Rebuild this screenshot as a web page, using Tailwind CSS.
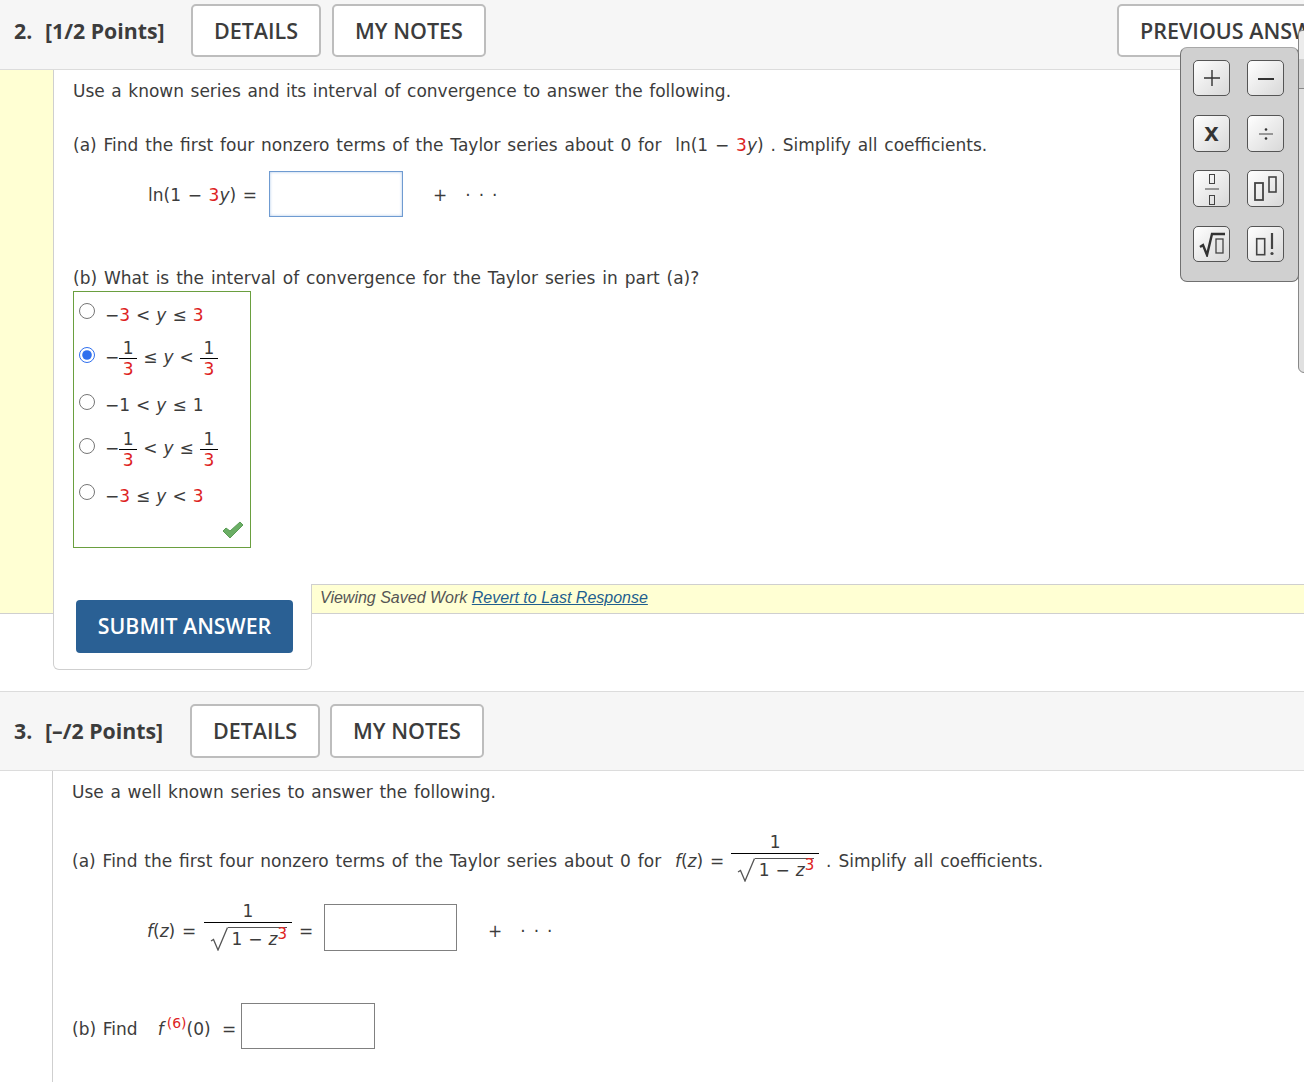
<!DOCTYPE html>
<html lang="en">
<head>
<meta charset="UTF-8">
<title>Taylor series</title>
<script src="https://cdn.jsdelivr.net/npm/@tailwindcss/browser@4"></script>
</head>
<body class="bg-white overflow-hidden">
<div class="relative w-[1304px] h-[1082px] overflow-hidden font-['DejaVu_Sans',sans-serif] text-[17px] [word-spacing:1.3px] text-[#3c3c3c]">

  <!-- Question 2 header -->
  <div class="h-[70px] bg-[#f6f6f6] border-b border-[#dcdcdc] flex items-center pl-[14px] pb-[8px] font-['Open_Sans',sans-serif] [word-spacing:0] whitespace-nowrap">
    <span class="font-bold text-[21.3px] w-[31px] shrink-0">2.</span>
    <span class="font-bold text-[21.3px] w-[146px] shrink-0">[1/2 Points]</span>
    <span class="h-[53px] w-[130px] shrink-0 pt-[2px] bg-white border-2 border-[#bdbdbd] rounded-[5px] flex items-center justify-center text-[21.5px] font-semibold">DETAILS</span>
    <span class="h-[53px] w-[154px] shrink-0 pt-[2px] ml-[11px] bg-white border-2 border-[#bdbdbd] rounded-[5px] flex items-center justify-center text-[21.5px] font-semibold">MY NOTES</span>
    <span class="h-[53px] w-[260px] shrink-0 pt-[2px] ml-[631px] bg-white border-2 border-[#bdbdbd] rounded-[5px] flex items-center pl-[21px] text-[21.5px] font-semibold">PREVIOUS ANSWERS</span>
  </div>

  <!-- Question 2 body -->
  <div class="flex">
    <div class="w-[54px] h-[544px] shrink-0 bg-[#ffffd3] border-r border-b border-[#cfcfcf]"></div>
    <div class="flex-1 min-w-0">
      <div class="pl-[19px] h-[514px]">
        <div class="h-[40px] pt-[3px] flex items-center [word-spacing:1.15px]">Use a known series and its interval of convergence to answer the following.</div>
        <div class="h-[40px] pt-[3px] mt-[14px] flex items-center whitespace-pre [word-spacing:1.45px]">(a) Find the first four nonzero terms of the Taylor series about 0 for  ln(1 − <span class="text-[#d22]">3</span><i>y</i>) . Simplify all coefficients.</div>
        <div class="h-[46px] mt-[7px] flex items-center pl-[75px] whitespace-pre">
          <span class="w-[121px] mt-[4px]">ln(1 − <span class="text-[#d22]">3</span><i>y</i>) =</span>
          <input type="text" class="w-[134px] h-[46px] border border-[#6f9bd1] shadow-[inset_0_0_3px_#a9c5e8] bg-white">
          <span class="ml-[30px] mt-[4px]">+</span>
          <span class="ml-[18px] mt-[4px] tracking-[8px]">···</span>
        </div>
        <div class="h-[28px] pt-[3px] mt-[46px] flex items-center [word-spacing:1.55px]">(b) What is the interval of convergence for the Taylor series in part (a)?</div>
        <div class="relative w-[178px] h-[257px] border border-[#6a9f3f] pl-[5px] pt-[2px] [word-spacing:0.6px]">
          <label class="h-[40px] flex items-center whitespace-pre">
            <input type="radio" name="iv" class="w-4 h-4 m-0 -mt-[6px] mr-[10px]">
            <span class="mt-[4px]">−<span class="text-[#d22]">3</span> &lt; <i>y</i> ≤ <span class="text-[#d22]">3</span></span>
          </label>
          <label class="h-[40px] mt-[2px] flex items-center whitespace-pre">
            <input type="radio" name="iv" checked class="w-4 h-4 m-0 -mt-[2px] mr-[10px] accent-[#2f6fee]">
            <span class="mt-[4px]">−</span>
            <span class="inline-flex flex-col items-center w-[18px] mt-[4px] leading-[20px]"><span>1</span><span class="w-full border-t border-black"></span><span class="text-[#d22]">3</span></span>
            <span class="mt-[4px]"> ≤ <i>y</i> &lt; </span>
            <span class="inline-flex flex-col items-center w-[18px] mt-[4px] leading-[20px]"><span>1</span><span class="w-full border-t border-black"></span><span class="text-[#d22]">3</span></span>
          </label>
          <label class="h-[40px] mt-[8px] flex items-center whitespace-pre">
            <input type="radio" name="iv" class="w-4 h-4 m-0 -mt-[4px] mr-[10px]">
            <span class="mt-[4px]">−1 &lt; <i>y</i> ≤ 1</span>
          </label>
          <label class="h-[40px] mt-[3px] flex items-center whitespace-pre">
            <input type="radio" name="iv" class="w-4 h-4 m-0 -mt-[2px] mr-[10px]">
            <span class="mt-[4px]">−</span>
            <span class="inline-flex flex-col items-center w-[18px] mt-[4px] leading-[20px]"><span>1</span><span class="w-full border-t border-black"></span><span class="text-[#d22]">3</span></span>
            <span class="mt-[4px]"> &lt; <i>y</i> ≤ </span>
            <span class="inline-flex flex-col items-center w-[18px] mt-[4px] leading-[20px]"><span>1</span><span class="w-full border-t border-black"></span><span class="text-[#d22]">3</span></span>
          </label>
          <label class="h-[40px] mt-[8px] flex items-center whitespace-pre">
            <input type="radio" name="iv" class="w-4 h-4 m-0 -mt-[6px] mr-[10px]">
            <span class="mt-[4px]">−<span class="text-[#d22]">3</span> ≤ <i>y</i> &lt; <span class="text-[#d22]">3</span></span>
          </label>
          <svg class="absolute left-[148px] top-[228px]" width="22" height="20" viewBox="0 0 22 20"><path d="M1 11 L4 8 L8 11 L18 2 L21 5 L8 18 Z" fill="#6bae65" stroke="#5a9c55" stroke-width="1"/></svg>
        </div>
      </div>
      <div class="flex items-start">
        <div class="w-[259px] h-[86px] shrink-0 -ml-px bg-white border-x border-b border-[#cfcfcf] rounded-b-[6px] pl-[22px] pt-[16px]">
          <span class="w-[217px] h-[53px] pb-[2px] bg-[#2a6094] rounded-[4px] flex items-center justify-center text-white font-['Open_Sans',sans-serif] font-semibold text-[21.3px] [word-spacing:0]">SUBMIT ANSWER</span>
        </div>
        <div class="flex-1 h-[30px] bg-[#ffffd3] border-y border-[#cfcfcf] flex items-center pl-[8px] pb-[2px] font-['Liberation_Sans',sans-serif] italic text-[16px] text-[#555] [word-spacing:0] whitespace-pre">Viewing Saved Work <a class="text-[#1f5f8f] underline">Revert to Last Response</a></div>
      </div>
    </div>
  </div>

  <!-- Question 3 header -->
  <div class="h-[80px] mt-[21px] bg-[#f6f6f6] border-y border-[#dcdcdc] flex items-center pl-[14px] font-['Open_Sans',sans-serif] [word-spacing:0] whitespace-nowrap">
    <span class="font-bold text-[21.3px] w-[31px] shrink-0">3.</span>
    <span class="font-bold text-[21.3px] w-[145px] shrink-0">[–/2 Points]</span>
    <span class="h-[54px] w-[130px] shrink-0 bg-white border-2 border-[#bdbdbd] rounded-[5px] flex items-center justify-center text-[21.5px] font-semibold">DETAILS</span>
    <span class="h-[54px] w-[154px] shrink-0 ml-[10px] bg-white border-2 border-[#bdbdbd] rounded-[5px] flex items-center justify-center text-[21.5px] font-semibold">MY NOTES</span>
  </div>

  <!-- Question 3 body -->
  <div class="ml-[52px] border-l border-[#cfcfcf] pl-[19px] h-[320px]">
    <div class="h-[40px] pt-[3px] flex items-center">Use a well known series to answer the following.</div>
    <div class="h-[51px] mt-[20px] flex items-center whitespace-pre [word-spacing:1.5px]">
      <span class="mt-[10px]">(a) Find the first four nonzero terms of the Taylor series about 0 for  <i>f</i>(<i>z</i>) = </span>
      <span class="inline-flex flex-col items-center w-[88px] [word-spacing:0.6px]">
        <span class="leading-[22px]">1</span>
        <span class="w-full border-t border-black"></span>
        <span class="flex items-start h-[28px] pt-[4px]">
          <svg width="18" height="24" viewBox="0 0 18 24"><path d="M1 14 L3.5 12.5 L8 23 L17.5 0.5" fill="none" stroke="#555" stroke-width="1.3"/></svg><span class="w-[59px] border-t border-[#555] leading-[23px] pl-[4px]">1 − <i>z</i><sup class="top-0 text-[#d22] text-[15px] align-[6px] leading-[0]">3</sup></span>
        </span>
      </span>
      <span class="mt-[10px]"> . Simplify all coefficients.</span>
    </div>
    <div class="h-[51px] mt-[18px] pl-[75px] flex items-center whitespace-pre">
      <span class="mt-[12px] w-[57px]"><i>f</i>(<i>z</i>) = </span>
      <span class="inline-flex flex-col items-center w-[88px] [word-spacing:0.6px]">
        <span class="leading-[22px]">1</span>
        <span class="w-full border-t border-black"></span>
        <span class="flex items-start h-[28px] pt-[4px]">
          <svg width="18" height="24" viewBox="0 0 18 24"><path d="M1 14 L3.5 12.5 L8 23 L17.5 0.5" fill="none" stroke="#555" stroke-width="1.3"/></svg><span class="w-[59px] border-t border-[#555] leading-[23px] pl-[4px]">1 − <i>z</i><sup class="top-0 text-[#d22] text-[15px] align-[6px] leading-[0]">3</sup></span>
        </span>
      </span>
      <span class="ml-[7px] w-[25px] mt-[12px]">=</span>
      <input type="text" class="w-[133px] h-[47px] mt-[4px] border border-[#808080] bg-white">
      <span class="ml-[31px] mt-[12px]">+</span>
      <span class="ml-[18px] tracking-[8px] mt-[12px]">···</span>
    </div>
    <div class="h-[46px] mt-[52px] flex items-center whitespace-pre">
      <span class="w-[150px] mt-[8px]">(b) Find   <i>f</i><sup class="top-0 ml-[3px] text-[#d22] text-[14px] align-[7px] leading-[0]">(6)</sup>(0)</span>
      <span class="w-[19px] mt-[8px]">=</span>
      <input type="text" class="w-[134px] h-[46px] border border-[#808080] bg-white">
    </div>
  </div>

  <!-- Symbol palette -->
  <div class="absolute left-[1298px] top-[30px] w-[10px] h-[30px] bg-[#ececec] border border-[#888] rounded-tl-[4px]"></div>
  <div class="absolute left-[1298px] top-[88px] w-[10px] h-[285px] bg-[#e0e0e0] border border-[#888] rounded-bl-[6px]"></div>
  <div class="absolute left-[1294px] top-[59px] w-[10px] h-[29px] bg-[#d0d0d0]"></div>
  <div class="absolute left-[1180px] top-[47px] w-[119px] h-[235px] bg-[#d0d0d0] border border-[#707070] border-t-[#a8a8a8] rounded-[7px] grid grid-cols-[37px_37px] gap-x-[17px] content-start pl-[12px] pt-[12px]">
    <span class="h-[36px] border border-[#555] rounded-[5px] bg-linear-to-br from-white to-[#d8d8d8] flex items-center justify-center">
      <svg width="18" height="18" viewBox="0 0 18 18"><path d="M9 1V17M1 9H17" stroke="#333" stroke-width="1.4"/></svg>
    </span>
    <span class="h-[36px] border border-[#555] rounded-[5px] bg-linear-to-br from-white to-[#d8d8d8] flex items-center justify-center">
      <svg width="18" height="18" viewBox="0 0 18 18"><path d="M1 10H17" stroke="#333" stroke-width="2"/></svg>
    </span>
    <span class="h-[37px] mt-[19px] pb-[3px] border border-[#555] rounded-[5px] bg-linear-to-br from-white to-[#d8d8d8] flex items-center justify-center font-['Liberation_Sans',sans-serif] font-bold text-[26px] leading-none text-[#333]">x</span>
    <span class="h-[37px] mt-[19px] border border-[#555] rounded-[5px] bg-linear-to-br from-white to-[#d8d8d8] flex items-center justify-center">
      <svg width="18" height="18" viewBox="0 0 18 18"><path d="M2 9H16" stroke="#444" stroke-width="1"/><circle cx="9" cy="4.5" r="1.3" fill="#333"/><circle cx="9" cy="13.5" r="1.3" fill="#333"/></svg>
    </span>
    <span class="h-[37px] mt-[18px] border border-[#555] rounded-[5px] bg-linear-to-br from-white to-[#d8d8d8] flex items-center justify-center">
      <svg width="16" height="34" viewBox="0 0 16 34"><rect x="5.5" y="2.5" width="5" height="9" fill="none" stroke="#444"/><path d="M1 17H15" stroke="#444"/><rect x="5.5" y="23.5" width="5" height="9" fill="none" stroke="#444"/></svg>
    </span>
    <span class="h-[37px] mt-[18px] border border-[#555] rounded-[5px] bg-linear-to-br from-white to-[#d8d8d8] flex items-center justify-center">
      <svg width="26" height="28" viewBox="0 0 26 28"><rect x="2" y="8" width="8" height="17" fill="none" stroke="#444" stroke-width="1.8"/><rect x="16" y="2" width="7" height="15" fill="none" stroke="#444" stroke-width="1.6"/></svg>
    </span>
    <span class="h-[36px] mt-[19px] border border-[#555] rounded-[5px] bg-linear-to-br from-white to-[#d8d8d8] flex items-center justify-center">
      <svg width="28" height="26" viewBox="0 0 28 26"><path d="M2 16L5 14L9 24L14 3H27" fill="none" stroke="#333" stroke-width="2.4"/><rect x="18" y="8" width="7" height="14" fill="none" stroke="#444" stroke-width="1.3"/></svg>
    </span>
    <span class="h-[36px] mt-[19px] border border-[#555] rounded-[5px] bg-linear-to-br from-white to-[#d8d8d8] flex items-center justify-center">
      <svg width="24" height="26" viewBox="0 0 24 26"><rect x="2.7" y="7.7" width="8" height="16" fill="none" stroke="#444" stroke-width="1.6"/><path d="M18 2V18" stroke="#444" stroke-width="2.2"/><circle cx="18" cy="22.5" r="1.6" fill="#444"/></svg>
    </span>
  </div>
</div>
</body>
</html>
